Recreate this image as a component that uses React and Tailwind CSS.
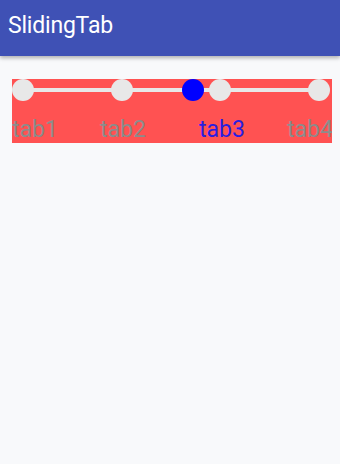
import React from "react";

const labels = [
  { text: "tab1", ml: "ml-0", active: false },
  { text: "tab2", ml: "ml-[45px]", active: false },
  { text: "tab3", ml: "ml-[56px]", active: true },
  { text: "tab4", ml: "ml-[45px]", active: false },
];

export default function App() {
  return (
    <div className="w-[340px] h-[464px] bg-[#f8f9fb] overflow-hidden" style={{ fontFamily: "Roboto, 'Noto Sans', sans-serif" }}>
      {/* App bar */}
      <div className="h-14 bg-[#3f51b5] flex items-start pt-[14px] px-2 shadow-[0_2px_4px_rgba(0,0,0,0.3)] relative z-10">
        <span className="text-white text-[23px] leading-none tracking-[-0.2px]">SlidingTab</span>
      </div>

      {/* Sliding tab strip */}
      <div className="mt-[23px] ml-3 w-[320px] h-[64px] bg-[#ff5252] overflow-hidden relative">
        <div className="relative h-[22px] w-[318px]">
          <div className="absolute left-[11px] right-[11px] top-[9px] h-[4px] bg-[#e8e8e8]" />
          <div className="relative flex justify-between h-full">
            {[0, 1, 2, 3].map((i) => (
              <div key={i} className="w-[22px] h-[22px] rounded-full bg-[#e8e8e8]" />
            ))}
          </div>
          <div className="absolute left-[170px] top-0 w-[22px] h-[22px] rounded-full bg-[#0000ff]" />
        </div>
        <div className="flex mt-[15px] whitespace-nowrap">
          {labels.map((l) => (
            <span
              key={l.text}
              className={`${l.ml} text-[23px] leading-[28px] w-[43px] shrink-0 ${l.active ? "text-[#2a1ee0]" : "text-[#8c8c8c]"}`}
            >
              {l.text}
            </span>
          ))}
        </div>
      </div>
    </div>
  );
}
